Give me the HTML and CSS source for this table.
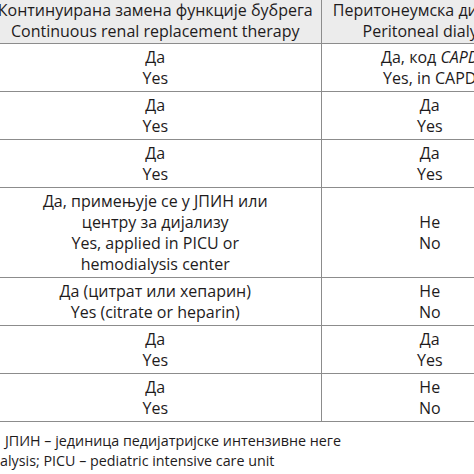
FILE: index.html
```html
<!DOCTYPE html>
<html lang="sr">
<head>
<meta charset="utf-8">
<link rel="stylesheet" href="styles.css">
</head>
<body>
<div class="page">
  <table class="grid">
    <colgroup><col class="c1"><col class="c2"></colgroup>
    <thead>
      <tr>
        <th>Континуирана замена функције бубрега<br>Continuous renal replacement therapy</th>
        <th>Перитонеумска дијализа<br>Peritoneal dialysis</th>
      </tr>
    </thead>
    <tbody>
      <tr><td>Да<br>Yes</td><td>Да, код <i>CAPD</i><br>Yes, in CAPD</td></tr>
      <tr><td>Да<br>Yes</td><td>Да<br>Yes</td></tr>
      <tr><td>Да<br>Yes</td><td>Да<br>Yes</td></tr>
      <tr><td>Да, примењује се у ЈПИН или<br>центру за дијализу<br>Yes, applied in PICU or<br>hemodialysis center</td><td>Не<br>No</td></tr>
      <tr><td>Да (цитрат или хепарин)<br>Yes (citrate or heparin)</td><td>Не<br>No</td></tr>
      <tr><td>Да<br>Yes</td><td>Да<br>Yes</td></tr>
      <tr><td>Да<br>Yes</td><td>Не<br>No</td></tr>
    </tbody>
  </table>
  <div class="notes">
    <p class="n1">ЈПИН – јединица педијатријске интензивне неге</p>
    <p class="n2">alysis; PICU – pediatric intensive care unit</p>
  </div>
</div>
</body>
</html>
```
FILE: styles.css
```css
html, body {
  margin: 0;
  padding: 0;
  background: #ffffff;
}
body {
  width: 474px;
  height: 474px;
  overflow: hidden;
  font-family: "Open Sans", "Liberation Sans", sans-serif;
  font-size: 16px;
  line-height: 21px;
  color: #1e1b1c;
}
.page {
  width: 474px;
  overflow: hidden;
}
.grid {
  border-collapse: collapse;
  margin-left: -10px;
  margin-top: -1px;
  width: 548px;
  table-layout: fixed;
}
.c1 { width: 331px; }
.c2 { width: 217px; }
.grid th {
  background: #ececec;
  font-weight: normal;
  padding: 1px 0 1px;
  border-bottom: 1.5px solid #8c8c8c;
  text-align: center;
  white-space: nowrap;
}
.grid td {
  padding: 2.5px 0;
  text-align: center;
  white-space: nowrap;
  border-bottom: 1.5px solid #8c8c8c;
}
.grid th + th,
.grid td + td {
  border-left: 1.5px solid #8c8c8c;
}
.notes {
  padding-top: 9px;
}
.notes p {
  margin: 0;
  white-space: nowrap;
  font-size: 14.3px;
  line-height: 20px;
}
.n1 { padding-left: 5px; }
```
